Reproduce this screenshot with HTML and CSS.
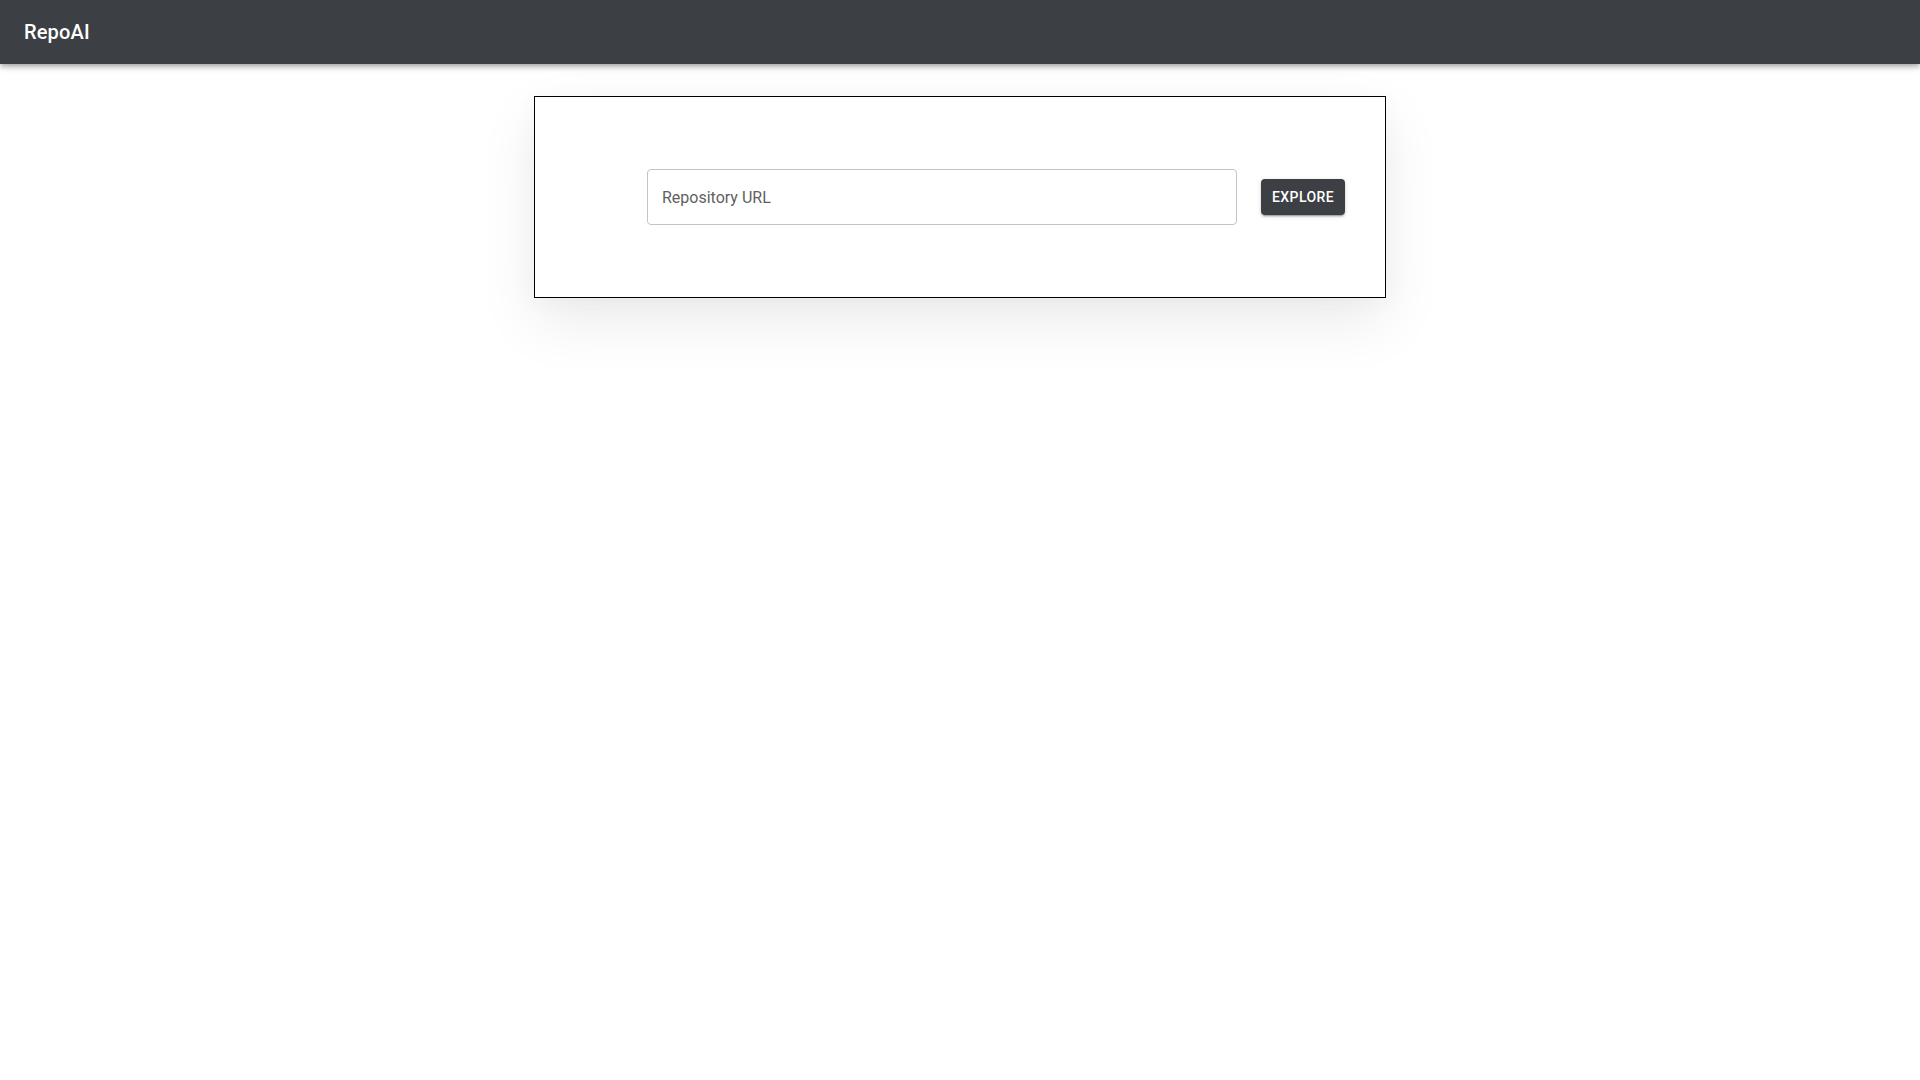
FILE: index.html
```html
<!DOCTYPE html>
<html lang="en">
<head>
<meta charset="utf-8">
<title>RepoAI</title>
<link rel="stylesheet" href="styles.css">
</head>
<body>
<header class="appbar">
  <div class="brand">RepoAI</div>
</header>
<main class="main">
  <section class="card">
    <input class="url-input" type="text" placeholder="Repository URL">
    <button class="explore-btn" type="button">Explore</button>
  </section>
</main>
</body>
</html>
```

FILE: styles.css
```css
* { box-sizing: border-box; }
html, body {
  margin: 0;
  padding: 0;
  background: #ffffff;
  font-family: Roboto, "Helvetica Neue", Arial, sans-serif;
}
body {
  min-height: 100vh;
  display: flex;
  flex-direction: column;
}
.appbar {
  height: 64px;
  flex: none;
  background: #3c3f43;
  color: #ffffff;
  display: flex;
  align-items: center;
  padding: 0 24px;
  box-shadow: 0 2px 4px -1px rgba(0,0,0,0.2), 0 4px 5px 0 rgba(0,0,0,0.14), 0 1px 10px 0 rgba(0,0,0,0.12);
  position: relative;
  z-index: 2;
}
.brand {
  font-size: 20px;
  font-weight: 500;
  letter-spacing: 0.15px;
}
.main {
  flex: 1;
  display: flex;
  justify-content: center;
  align-items: flex-start;
  padding-top: 32px;
}
.card {
  width: 852px;
  border: 1px solid #000000;
  background: #ffffff;
  display: flex;
  align-items: center;
  gap: 24px;
  padding: 72px 40px 72px 112px;
  box-shadow: 0 24px 56px rgba(0,0,0,0.08), 0 4px 24px rgba(0,0,0,0.03);
}
.url-input {
  flex: 1;
  height: 56px;
  border: 1px solid #c4c4c4;
  border-radius: 4px;
  padding: 0 14px;
  font-family: Roboto, Arial, sans-serif;
  font-size: 16px;
  color: #212121;
  background: #ffffff;
  outline: none;
}
.url-input::placeholder {
  color: #5f5f5f;
  opacity: 1;
}
.explore-btn {
  width: 84px;
  height: 36px;
  border: none;
  border-radius: 4px;
  background: #3c3f43;
  color: #ffffff;
  font-family: Roboto, Arial, sans-serif;
  font-size: 14px;
  font-weight: 500;
  letter-spacing: 0.4px;
  text-transform: uppercase;
  padding: 0;
  box-shadow: 0 3px 1px -2px rgba(0,0,0,0.2), 0 2px 2px 0 rgba(0,0,0,0.14), 0 1px 5px 0 rgba(0,0,0,0.12);
  cursor: pointer;
}
```
